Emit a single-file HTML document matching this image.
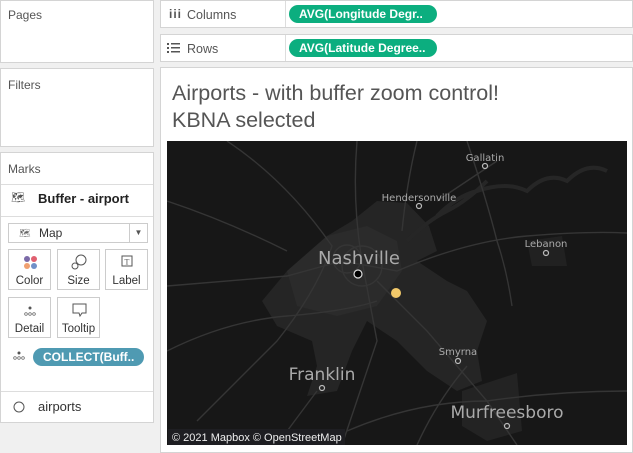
<!DOCTYPE html>
<html><head><meta charset="utf-8"><style>
*{box-sizing:border-box;margin:0;padding:0}
body{width:633px;height:453px;background:#f0f0f0;font-family:"Liberation Sans",sans-serif;position:relative;overflow:hidden;color:#333}
.p{position:absolute;background:#fff;border:1px solid #d4d4d4}
.t{position:absolute;font-size:12px;color:#555}
.pill{position:absolute;height:18px;border-radius:9px;background:#0cae7f;color:#fff;font-size:12px;font-weight:bold;line-height:18px;padding-left:10px}
.card{position:absolute;width:43px;height:41px;border:1px solid #ccc;background:#fff;font-size:11.5px;text-align:center;color:#333}
.card span{position:absolute;left:0;right:0;top:25px}
</style></head><body>
<div class="p" style="left:0;top:0;width:154px;height:63px"><div class="t" style="left:7px;top:7px">Pages</div></div>
<div class="p" style="left:0;top:68px;width:154px;height:79px"><div class="t" style="left:7px;top:9px">Filters</div></div>
<div class="p" style="left:0;top:152px;width:154px;height:271px">
 <div class="t" style="left:7px;top:9px">Marks</div>
 <div style="position:absolute;left:0;right:0;top:31px;border-top:1px solid #ddd"></div>
 <div style="position:absolute;left:10px;top:38px;font-size:11px;color:#555">🗺</div>
 <div style="position:absolute;left:37px;top:38px;font-size:13px;font-weight:bold;color:#222">Buffer - airport</div>
 <div style="position:absolute;left:0;right:0;top:63px;border-top:1px solid #ddd"></div>
 <div style="position:absolute;left:7px;top:70px;width:140px;height:20px;border:1px solid #ccc;font-size:12px;line-height:18px;padding-left:30px">Map<span style="position:absolute;left:10px;font-size:9px;color:#666">🗺</span><span style="position:absolute;right:0;top:0;width:18px;height:18px;border-left:1px solid #ccc;font-size:8px;text-align:center;color:#555">▼</span></div>
 <div class="card" style="left:7px;top:96px"><svg width="43" height="24"><circle cx="18" cy="9" r="3" fill="#7b6aa8"/><circle cx="25" cy="9" r="3" fill="#e06070"/><circle cx="18" cy="16" r="3" fill="#f0a070"/><circle cx="25" cy="16" r="3" fill="#7090c8"/></svg><span>Color</span></div>
 <div class="card" style="left:56px;top:96px"><svg width="43" height="24"><circle cx="23" cy="10" r="5" fill="none" stroke="#555"/><circle cx="17" cy="16" r="3" fill="#fff" stroke="#555"/></svg><span>Size</span></div>
 <div class="card" style="left:104px;top:96px"><svg width="43" height="24"><rect x="16" y="6" width="10" height="10" fill="none" stroke="#555"/><text x="21" y="14.5" font-size="8" text-anchor="middle" fill="#555" font-family="Liberation Serif">T</text></svg><span>Label</span></div>
 <div class="card" style="left:7px;top:144px"><svg width="43" height="24"><circle cx="21" cy="10" r="1.5" fill="#555"/><circle cx="17" cy="16" r="1.3" fill="none" stroke="#555" stroke-width=".7"/><circle cx="21" cy="16" r="1.3" fill="none" stroke="#555" stroke-width=".7"/><circle cx="25" cy="16" r="1.3" fill="none" stroke="#555" stroke-width=".7"/></svg><span>Detail</span></div>
 <div class="card" style="left:56px;top:144px"><svg width="43" height="24"><path d="M15 6h13v9h-4l-2 3-1-3h-6z" fill="none" stroke="#555"/></svg><span>Tooltip</span></div>
 <svg style="position:absolute;left:11px;top:197px" width="18" height="12"><circle cx="7" cy="3" r="1.5" fill="#555"/><circle cx="3" cy="8" r="1.3" fill="none" stroke="#555" stroke-width=".7"/><circle cx="7" cy="8" r="1.3" fill="none" stroke="#555" stroke-width=".7"/><circle cx="11" cy="8" r="1.3" fill="none" stroke="#555" stroke-width=".7"/></svg>
 <div class="pill" style="left:32px;top:195px;width:111px;background:#4f9ab2">COLLECT(Buff..</div>
 <div style="position:absolute;left:0;right:0;top:238px;border-top:1px solid #ddd"></div>
 <svg style="position:absolute;left:11px;top:247px" width="14" height="14"><circle cx="7" cy="7" r="5" fill="none" stroke="#555"/></svg>
 <div style="position:absolute;left:37px;top:246px;font-size:13px">airports</div>
</div>
<div class="p" style="left:160px;top:0;width:473px;height:28px">
 <div style="position:absolute;left:8px;top:6px;font-size:12px;font-weight:bold;color:#555;letter-spacing:1px">iii</div>
 <div class="t" style="left:26px;top:7px;font-size:12.5px">Columns</div>
 <div style="position:absolute;left:124px;top:0;bottom:0;border-left:1px solid #ddd"></div>
 <div class="pill" style="left:128px;top:4px;width:148px">AVG(Longitude Degr..</div>
</div>
<div class="p" style="left:160px;top:34px;width:473px;height:28px">
 <svg style="position:absolute;left:6px;top:8px" width="14" height="10"><g fill="#555"><rect x="0" y="0" width="2" height="2"/><rect x="0" y="4" width="2" height="2"/><rect x="0" y="8" width="2" height="2"/><rect x="4" y="0" width="9" height="1.5"/><rect x="4" y="4" width="9" height="1.5"/><rect x="4" y="8" width="9" height="1.5"/></g></svg>
 <div class="t" style="left:26px;top:7px;font-size:12.5px">Rows</div>
 <div style="position:absolute;left:124px;top:0;bottom:0;border-left:1px solid #ddd"></div>
 <div class="pill" style="left:128px;top:4px;width:148px">AVG(Latitude Degree..</div>
</div>
<div class="p" style="left:160px;top:67px;width:473px;height:386px">
 <div style="position:absolute;left:11px;top:12px;font-size:21.5px;color:#555;line-height:27px">Airports - with buffer zoom control!<br>KBNA selected</div>
</div>
<svg style="position:absolute;left:167px;top:141px" width="460" height="304" viewBox="0 0 460 304">
<rect width="460" height="304" fill="#171717"/>
<path d="M120 130 L160 95 L185 80 L210 60 L240 62 L262 85 L270 110 L250 120 L280 140 L300 150 L320 180 L310 210 L315 240 L290 250 L260 230 L230 200 L200 180 L185 210 L170 250 L140 255 L150 225 L145 200 L110 185 L95 160 Z" fill="#252525"/>
<path d="M120 130 L160 95 L200 85 L230 100 L235 130 L210 165 L170 175 L130 165 Z" fill="#2b2b2b"/>
<path d="M295 250 L350 232 L355 290 L320 300 L295 285Z" fill="#232323"/>
<path d="M360 100 L395 95 L400 125 L365 125Z" fill="#212121"/>
<path d="M240 100 Q260 80 280 70 Q300 60 320 40 M270 75 Q290 55 310 50 Q340 40 360 50 Q380 30 400 40 Q420 20 440 30" stroke="#262626" stroke-width="4" fill="none"/>
<g stroke="#353535" stroke-width="1.4" fill="none">
<path d="M0 145 Q60 140 120 135 L175 120 L230 130 Q300 100 360 95 Q420 90 460 92"/>
<path d="M190 0 Q185 60 195 120 L210 200 L175 304"/>
<path d="M210 140 L260 190 L320 260 L350 304"/>
<path d="M60 0 Q120 40 165 105 Q150 150 110 200 Q70 240 30 280"/>
<path d="M0 210 Q60 180 120 175 Q180 170 210 160"/>
<path d="M250 0 Q240 40 235 90 M300 0 Q320 60 330 100 Q340 130 345 165"/>
<path d="M0 60 Q60 80 120 110 M330 20 Q300 40 270 60"/>
<path d="M300 225 Q270 260 250 304 M150 250 Q120 290 110 304"/>
<path d="M180 290 Q250 260 320 260 Q390 250 460 250"/>
<circle cx="180" cy="118" r="14"/><circle cx="195" cy="125" r="20"/>
</g>
<g font-family="DejaVu Sans,sans-serif" fill="#aaa" text-anchor="middle">
<text x="318" y="20" font-size="10">Gallatin</text>
<text x="252" y="60" font-size="10">Hendersonville</text>
<text x="379" y="106" font-size="10">Lebanon</text>
<text x="291" y="214" font-size="10">Smyrna</text>
<text x="192" y="123" font-size="18">Nashville</text>
<text x="155" y="239" font-size="17">Franklin</text>
<text x="340" y="277" font-size="17">Murfreesboro</text>
</g>
<g fill="none" stroke="#bbb" stroke-width="1.2">
<circle cx="318" cy="25" r="2.5"/><circle cx="252" cy="65" r="2.5"/><circle cx="379" cy="112" r="2.5"/><circle cx="291" cy="220" r="2.5"/><circle cx="155" cy="247" r="2.5"/><circle cx="340" cy="285" r="2.5"/>
</g>
<circle cx="191" cy="133" r="4" fill="#000" stroke="#ddd" stroke-width="1.2"/>
<circle cx="229" cy="152" r="5" fill="#f2c96a"/>
<rect x="1" y="288" width="177" height="16" fill="#1e1e22"/>
<text x="5" y="300" font-size="11" fill="#eee" font-family="Liberation Sans,sans-serif">© 2021 Mapbox © OpenStreetMap</text>
</svg>
</body></html>
